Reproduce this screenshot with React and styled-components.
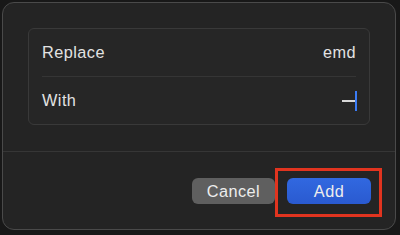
import React from "react";
import styled, { createGlobalStyle } from "styled-components";

const Global = createGlobalStyle`
  html, body { margin: 0; padding: 0; background: #181818; }
  body { font-family: "Liberation Sans", Arial, sans-serif; -webkit-font-smoothing: antialiased; }
  #root { padding: 2px 0 0 2px; }
`;

const Dialog = styled.div`
  position: relative;
  width: 392px;
  height: 226px;
  background: #242424;
  border: 1px solid #4a4a4a;
  border-radius: 12px;
  display: flex;
  flex-direction: column;
  box-sizing: content-box;
`;

const Body = styled.div`
  padding: 25px 25px 26px 25px;
`;

const Group = styled.div`
  background: #262626;
  border: 1px solid #393939;
  border-radius: 6px;
  padding: 0 13px;
  display: flex;
  flex-direction: column;
`;

const Row = styled.div`
  height: ${(p) => p.$h}px;
  display: flex;
  align-items: center;
  justify-content: space-between;
  border-bottom: ${(p) => (p.$divider ? "1px solid #353535" : "none")};
  color: #e2e2e2;
  font-size: 16.3px;
  letter-spacing: 0.45px;
`;

const Value = styled.span`
  display: flex;
  align-items: center;
  color: #e2e2e2;
`;

const Dash = styled.span`
  display: block;
  width: 13px;
  height: 2px;
  background: #d8d8d8;
`;

const Caret = styled.span`
  display: block;
  width: 2px;
  height: 20px;
  margin-right: -1px;
  background: #3b7cf5;
`;

const Divider = styled.div`
  height: 1px;
  background: #363636;
`;

const Footer = styled.div`
  flex: 1;
  display: flex;
  justify-content: flex-end;
  align-items: flex-start;
  gap: 12px;
  padding: 26px 24px 0 0;
`;

const Button = styled.button`
  height: 26px;
  width: ${(p) => p.$w}px;
  border: none;
  border-radius: 6px;
  font-family: "Liberation Sans", Arial, sans-serif;
  font-size: 16.3px;
  letter-spacing: 0.45px;
  color: #ededed;
  padding: 0;
  background: ${(p) =>
    p.$primary ? "linear-gradient(#3168e0, #2a5ad0)" : "#5f5f5f"};
`;

const Highlight = styled.div`
  position: absolute;
  left: 272px;
  top: 165px;
  width: 101px;
  height: 43px;
  border: 3px solid #e1341f;
  pointer-events: none;
`;

export default function App() {
  return (
    <>
      <Global />
      <Dialog>
        <Body>
          <Group>
            <Row $h={47} $divider>
              <span>Replace</span>
              <Value>emd</Value>
            </Row>
            <Row $h={47}>
              <span>With</span>
              <Value>
                <Dash />
                <Caret />
              </Value>
            </Row>
          </Group>
        </Body>
        <Divider />
        <Footer>
          <Button $w={83}>Cancel</Button>
          <Button $w={84} $primary>
            Add
          </Button>
        </Footer>
        <Highlight />
      </Dialog>
    </>
  );
}
